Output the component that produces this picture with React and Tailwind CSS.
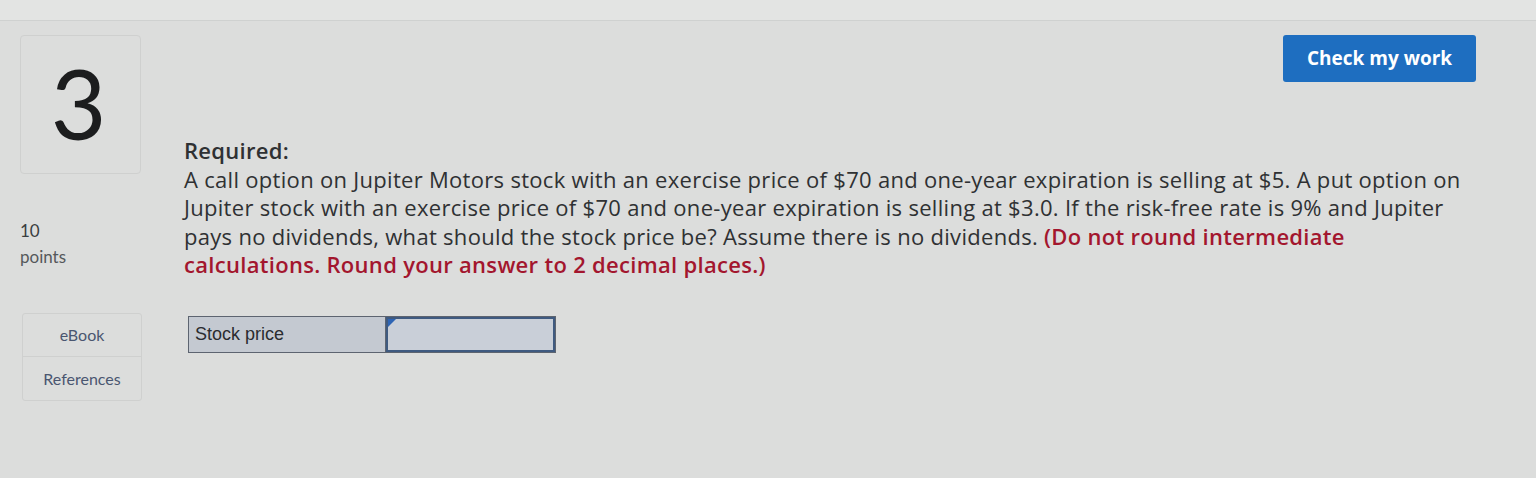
export default function App() {
  return (
    <div className="w-[1536px] h-[478px] overflow-hidden bg-[#dcdddc] text-[#2f3133]" style={{ fontFamily: 'Lato, "Open Sans", sans-serif' }}>
      <div className="h-[21px] bg-[#e3e4e3] border-b border-[#cfd1d0]" />
      <div className="flex">
        {/* left column */}
        <div className="w-[184px] shrink-0 pl-[20px]">
          <div className="mt-[14px] w-[121px] h-[139px] border border-[#cfd0cf] rounded-[4px] flex items-center justify-center">
            <span className="text-[96px] leading-none font-normal text-[#1c1d1e] -mt-[4px] -ml-[4px]">3</span>
          </div>
          <div className="mt-[44px] text-[17px] leading-[26px] text-[#3a3d40]">
            <div>10</div>
            <div className="text-[#55585b]">points</div>
          </div>
          <div className="mt-[43px] ml-[2px] w-[120px] border border-[#cfd0cf] rounded-[3px] text-[16px] text-[#4a5670]">
            <div className="h-[43px] flex items-center justify-center border-b border-[#cfd0cf]">eBook</div>
            <div className="h-[43px] flex items-center justify-center">References</div>
          </div>
        </div>

        {/* main */}
        <div className="flex-1 pr-[60px]">
          <div className="flex justify-end mt-[14px]">
            <button className="w-[193px] h-[47px] bg-[#1e6ec0] rounded-[3px] text-white font-bold text-[19px]" style={{ fontFamily: '"Open Sans", Lato, sans-serif' }}>
              Check my work
            </button>
          </div>
          <div className="mt-[54px] text-[22px] leading-[28.5px] tracking-[0.3px] whitespace-nowrap" style={{ fontFamily: '"Open Sans", Lato, sans-serif' }}>
            <div className="font-semibold">Required:</div>
            <p>
              A call option on Jupiter Motors stock with an exercise price of $70 and one-year expiration is selling at $5. A put option on
              <br />
              Jupiter stock with an exercise price of $70 and one-year expiration is selling at $3.0. If the risk-free rate is 9% and Jupiter
              <br />
              pays no dividends, what should the stock price be? Assume there is no dividends.{' '}
              <span className="font-semibold text-[#a3162e]">(Do not round intermediate</span>
              <br />
              <span className="font-semibold text-[#a3162e]">calculations. Round your answer to 2 decimal places.)</span>
            </p>
          </div>
          <div className="mt-[37px] ml-[4px] flex w-[368px] h-[37px] border border-[#5d6470]">
            <div className="w-[197px] bg-[#c4c9d1] border-r border-[#5d6470] flex items-center pl-[6px] text-[18px] text-[#2a2c30]" style={{ fontFamily: '"Liberation Sans", Arial, sans-serif' }}>
              Stock price
            </div>
            <div className="relative flex-1 bg-[#c9cfd8] border-2 border-[#3f5a80]">
              <span className="absolute left-0 top-0 w-0 h-0 border-t-[8px] border-t-[#2d64b4] border-r-[8px] border-r-transparent" />
            </div>
          </div>
        </div>
      </div>
    </div>
  );
}
